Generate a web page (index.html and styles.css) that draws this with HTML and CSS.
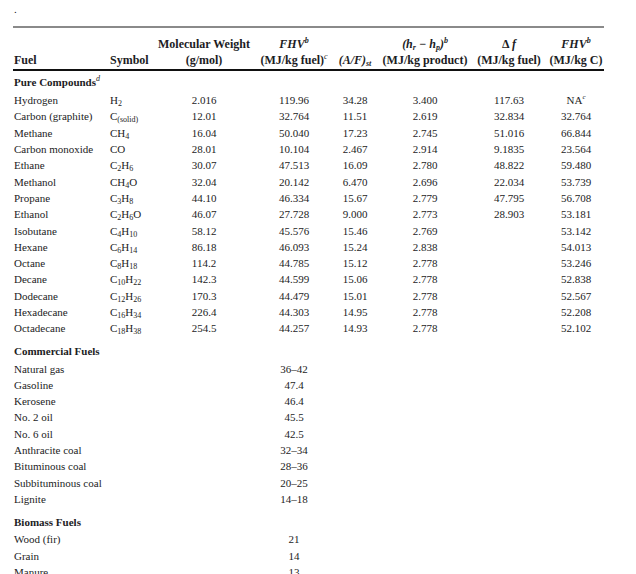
FILE: index.html
```html
<!DOCTYPE html>
<html lang="en">
<head>
    <meta charset="UTF-8">
    <title>Fuel properties</title>
    <link rel="stylesheet" href="styles.css">
</head>
<body>
    <div class="page">
        <div class="mark">.</div>
        <table class="fuels">
            <colgroup>
                <col class="c-fuel">
                <col class="c-sym">
                <col class="c-mw">
                <col class="c-fhv">
                <col class="c-af">
                <col class="c-hr">
                <col class="c-df">
                <col class="c-fhvc">
            </colgroup>
            <thead>
                <tr>
                    <th class="left">Fuel</th>
                    <th class="left">Symbol</th>
                    <th>Molecular Weight<br>(g/mol)</th>
                    <th><i>FHV<sup>b</sup></i><br>(MJ/kg fuel)<sup class="light"><i>c</i></sup></th>
                    <th><i>(A/F)<sub>st</sub></i></th>
                    <th><i>(h<sub>r</sub> − h<sub>p</sub>)<sup>b</sup></i><br>(MJ/kg product)</th>
                    <th>Δ <i>f</i><br>(MJ/kg fuel)</th>
                    <th><i>FHV<sup>b</sup></i><br>(MJ/kg C)</th>
                </tr>
            </thead>
            <tbody>
                <tr class="group first"><td colspan="8">Pure Compounds<sup class="light"><i>d</i></sup></td></tr>
                <tr><td>Hydrogen</td><td>H<sub>2</sub></td><td>2.016</td><td>119.96</td><td>34.28</td><td>3.400</td><td>117.63</td><td>NA<sup class="note"><i>c</i></sup></td></tr>
                <tr><td>Carbon (graphite)</td><td>C<sub>(solid)</sub></td><td>12.01</td><td>32.764</td><td>11.51</td><td>2.619</td><td>32.834</td><td>32.764</td></tr>
                <tr><td>Methane</td><td>CH<sub>4</sub></td><td>16.04</td><td>50.040</td><td>17.23</td><td>2.745</td><td>51.016</td><td>66.844</td></tr>
                <tr><td>Carbon monoxide</td><td>CO</td><td>28.01</td><td>10.104</td><td>2.467</td><td>2.914</td><td>9.1835</td><td>23.564</td></tr>
                <tr><td>Ethane</td><td>C<sub>2</sub>H<sub>6</sub></td><td>30.07</td><td>47.513</td><td>16.09</td><td>2.780</td><td>48.822</td><td>59.480</td></tr>
                <tr><td>Methanol</td><td>CH<sub>4</sub>O</td><td>32.04</td><td>20.142</td><td>6.470</td><td>2.696</td><td>22.034</td><td>53.739</td></tr>
                <tr><td>Propane</td><td>C<sub>3</sub>H<sub>8</sub></td><td>44.10</td><td>46.334</td><td>15.67</td><td>2.779</td><td>47.795</td><td>56.708</td></tr>
                <tr><td>Ethanol</td><td>C<sub>2</sub>H<sub>6</sub>O</td><td>46.07</td><td>27.728</td><td>9.000</td><td>2.773</td><td>28.903</td><td>53.181</td></tr>
                <tr><td>Isobutane</td><td>C<sub>4</sub>H<sub>10</sub></td><td>58.12</td><td>45.576</td><td>15.46</td><td>2.769</td><td></td><td>53.142</td></tr>
                <tr><td>Hexane</td><td>C<sub>6</sub>H<sub>14</sub></td><td>86.18</td><td>46.093</td><td>15.24</td><td>2.838</td><td></td><td>54.013</td></tr>
                <tr><td>Octane</td><td>C<sub>8</sub>H<sub>18</sub></td><td>114.2</td><td>44.785</td><td>15.12</td><td>2.778</td><td></td><td>53.246</td></tr>
                <tr><td>Decane</td><td>C<sub>10</sub>H<sub>22</sub></td><td>142.3</td><td>44.599</td><td>15.06</td><td>2.778</td><td></td><td>52.838</td></tr>
                <tr><td>Dodecane</td><td>C<sub>12</sub>H<sub>26</sub></td><td>170.3</td><td>44.479</td><td>15.01</td><td>2.778</td><td></td><td>52.567</td></tr>
                <tr><td>Hexadecane</td><td>C<sub>16</sub>H<sub>34</sub></td><td>226.4</td><td>44.303</td><td>14.95</td><td>2.778</td><td></td><td>52.208</td></tr>
                <tr><td>Octadecane</td><td>C<sub>18</sub>H<sub>38</sub></td><td>254.5</td><td>44.257</td><td>14.93</td><td>2.778</td><td></td><td>52.102</td></tr>

                <tr class="group"><td colspan="8">Commercial Fuels</td></tr>
                <tr><td>Natural gas</td><td></td><td></td><td>36–42</td><td></td><td></td><td></td><td></td></tr>
                <tr><td>Gasoline</td><td></td><td></td><td>47.4</td><td></td><td></td><td></td><td></td></tr>
                <tr><td>Kerosene</td><td></td><td></td><td>46.4</td><td></td><td></td><td></td><td></td></tr>
                <tr><td>No. 2 oil</td><td></td><td></td><td>45.5</td><td></td><td></td><td></td><td></td></tr>
                <tr><td>No. 6 oil</td><td></td><td></td><td>42.5</td><td></td><td></td><td></td><td></td></tr>
                <tr><td>Anthracite coal</td><td></td><td></td><td>32–34</td><td></td><td></td><td></td><td></td></tr>
                <tr><td>Bituminous coal</td><td></td><td></td><td>28–36</td><td></td><td></td><td></td><td></td></tr>
                <tr><td>Subbituminous coal</td><td></td><td></td><td>20–25</td><td></td><td></td><td></td><td></td></tr>
                <tr><td>Lignite</td><td></td><td></td><td>14–18</td><td></td><td></td><td></td><td></td></tr>

                <tr class="group"><td colspan="8">Biomass Fuels</td></tr>
                <tr><td>Wood (fir)</td><td></td><td></td><td>21</td><td></td><td></td><td></td><td></td></tr>
                <tr><td>Grain</td><td></td><td></td><td>14</td><td></td><td></td><td></td><td></td></tr>
                <tr><td>Manure</td><td></td><td></td><td>13</td><td></td><td></td><td></td><td></td></tr>
            </tbody>
        </table>
    </div>
</body>
</html>
```

FILE: styles.css
```css
* {
    box-sizing: border-box;
    margin: 0;
    padding: 0;
}

body {
    background-color: #fff;
    color: #1c1c24;
    font-family: "Liberation Serif", "Times New Roman", serif;
    font-size: 11px;
}

.page {
    padding: 4px 0 0 13px;
    width: 604px;
}

.mark {
    height: 22px;
    line-height: 10px;
    padding-left: 1px;
}

.fuels {
    width: 591px;
    table-layout: fixed;
    border-collapse: collapse;
}

.c-fuel { width: 96px; }
.c-sym  { width: 41px; }
.c-mw   { width: 108px; }
.c-fhv  { width: 72px; }
.c-af   { width: 50px; }
.c-hr   { width: 90px; }
.c-df   { width: 78px; }
.c-fhvc { width: 56px; }

thead tr {
    border-top: 2px solid #8a8a8a;
    border-bottom: 2px solid #111;
}

th {
    font-size: 12px;
    font-weight: bold;
    line-height: 16px;
    text-align: center;
    vertical-align: bottom;
    white-space: nowrap;
    padding: 8px 0 1px;
}

th.left {
    text-align: left;
    padding-left: 1px;
}

sup, sub {
    font-size: 8px;
    line-height: 0;
}

sub {
    vertical-align: -2px;
}

sup.light {
    font-weight: normal;
}

td {
    height: 16.3px;
    line-height: 16px;
    text-align: center;
    white-space: nowrap;
    padding: 0;
}

td:first-child,
td:nth-child(2) {
    text-align: left;
    padding-left: 1px;
}

.note {
    font-size: 7px;
}

.group td {
    font-weight: bold;
    height: auto;
    padding: 7px 0 1px 1px;
}

.group.first td {
    padding: 3px 0 2px 1px;
}
```
